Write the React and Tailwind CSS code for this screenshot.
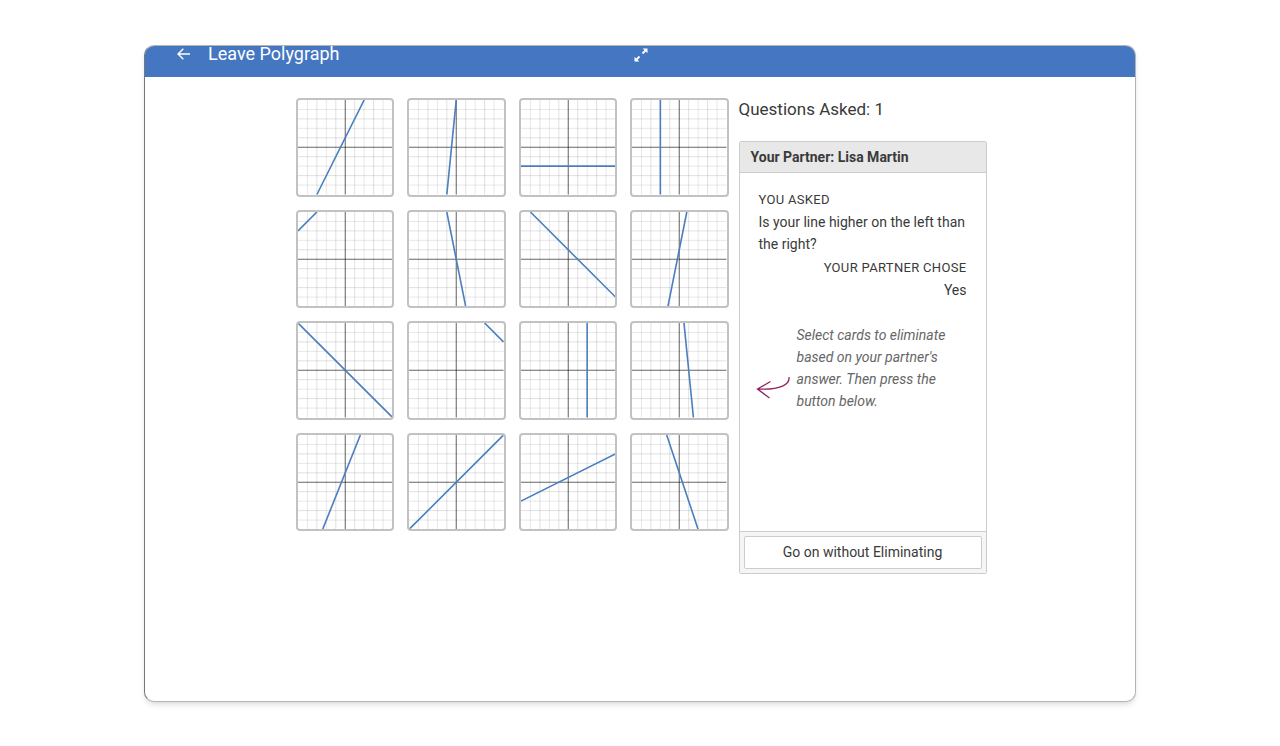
import { useState } from "react";

// each line runs from [x1, y1] to [x2, y2] on a -5..5 plane
const cards = [
  { name: "y = 2x + 1", from: [2, 5], to: [-3, -5] },
  { name: "y = 10x + 5", from: [0, 5], to: [-1, -5] },
  { name: "y = -2", from: [-5, -2], to: [5, -2] },
  { name: "x = -2", from: [-2, 5], to: [-2, -5] },
  { name: "y = x + 8", from: [-5, 3], to: [-3, 5] },
  { name: "y = -5x", from: [-1, 5], to: [1, -5] },
  { name: "y = -x + 1", from: [-4, 5], to: [5, -4] },
  { name: "y = 5x + 1", from: [0.8, 5], to: [-1.2, -5] },
  { name: "y = -x", from: [-5, 5], to: [5, -5] },
  { name: "y = -x + 8", from: [3, 5], to: [5, 3] },
  { name: "x = 2", from: [2, 5], to: [2, -5] },
  { name: "y = -10x + 10", from: [0.5, 5], to: [1.5, -5] },
  { name: "y = 2.5x + 1", from: [1.6, 5], to: [-2.4, -5] },
  { name: "y = x", from: [-5, -5], to: [5, 5] },
  { name: "y = 0.5x + 0.5", from: [-5, -2], to: [5, 3] },
  { name: "y = -3x + 1", from: [-1.33, 5], to: [2, -5] },
];

const ticks = [-4, -3, -2, -1, 1, 2, 3, 4];

function Graph({ from, to }) {
  return (
    <svg viewBox="-50 -50 100 100" className="block h-full w-full" aria-hidden="true">
      {ticks.map((t) => (
        <g key={t} stroke="#000" strokeOpacity={t % 2 ? 0.13 : 0.1} strokeWidth="1">
          <line x1={t * 10} y1="-50" x2={t * 10} y2="50" />
          <line x1="-50" y1={t * 10} x2="50" y2={t * 10} />
        </g>
      ))}
      <g stroke="#000" strokeOpacity="0.6" strokeWidth="1.1">
        <line x1="0" y1="-50" x2="0" y2="50" />
        <line x1="-50" y1="0" x2="50" y2="0" />
      </g>
      <line
        x1={from[0] * 10}
        y1={-from[1] * 10}
        x2={to[0] * 10}
        y2={-to[1] * 10}
        stroke="#4a7ebf"
        strokeWidth="1.7"
      />
    </svg>
  );
}

function Header() {
  return (
    <header className="grid h-[31px] grid-cols-[1fr_auto_1fr] items-start bg-[#4476c2] text-white">
      <a href="#" className="flex h-4 items-center gap-[18px] pl-8 text-lg">
        <svg width="13" height="12" viewBox="0 0 13 12" fill="none" stroke="currentColor" strokeWidth="1.4" aria-hidden="true">
          <path d="M13 6H1M6.3 0.7L1 6l5.3 5.3" />
        </svg>
        Leave Polygraph
      </a>
      <button type="button" aria-label="Full screen" className="flex h-[18px] items-center pl-0.5">
        <svg width="14" height="14" viewBox="0 0 14 14" fill="currentColor" aria-hidden="true">
          <path d="M8.7 0.5h4.8v4.8L11.8 3.6L9.2 6.2L7.8 4.8L10.4 2.2z" />
          <path d="M0.5 8.7v4.8h4.8L3.6 11.8L6.2 9.2L4.8 7.8L2.2 10.4z" />
        </svg>
      </button>
    </header>
  );
}

function PartnerPanel({ eliminated }) {
  return (
    <section className="flex h-[433px] flex-col rounded-xs border border-[#ccc] text-sm">
      <h2 className="flex h-[31px] items-center border-b border-[#ccc] bg-[#e8e8e8] px-[11px] pb-px font-bold">
        Your Partner: Lisa Martin
      </h2>
      <div className="flex-1 px-[19px] pt-4 leading-[22px]">
        <p className="text-[13px] leading-[22px] tracking-wide">YOU ASKED</p>
        <p>Is your line higher on the left than the right?</p>
        <div className="mt-0.5 text-right">
          <p className="text-[13px] leading-[22px] tracking-wide">YOUR PARTNER CHOSE</p>
          <p>Yes</p>
        </div>
        <div className="mt-[23px] flex">
          <svg width="38" height="86" viewBox="0 0 38 86" fill="none" stroke="#8f2464" strokeWidth="1.3" className="shrink-0 overflow-visible" aria-hidden="true">
            <path d="M30 53C31 60 22 66.500 -1.500 65M11.500 57.500L-1.500 65L10.500 74" />
          </svg>
          <p className="pr-3 text-[#666] italic">
            Select cards to eliminate based on your partner's answer. Then press the button below.
          </p>
        </div>
      </div>
      <div className="border-t border-[#ccc] bg-[#f5f5f5] p-1">
        <button type="button" className="h-[33px] w-full rounded-xs border border-[#ccc] bg-white pb-0.5">
          {eliminated ? "Eliminate" : "Go on without Eliminating"}
        </button>
      </div>
    </section>
  );
}

export default function App() {
  const [selected, setSelected] = useState([]);

  const toggle = (i) =>
    setSelected(selected.includes(i) ? selected.filter((s) => s !== i) : [...selected, i]);

  return (
    <div className="flex min-h-screen flex-col bg-white px-36 pt-[45px] pb-11 font-['Roboto',sans-serif] text-[#3a3a3a]">
      <div className="flex-1 overflow-hidden rounded-[10px] border border-[#b4b4b4] border-l-[#777] bg-white shadow-md">
        <Header />
        <main className="flex justify-center gap-[10px] pt-[21px] pl-0.5">
          <div className="grid w-[433px] grid-cols-4 content-start gap-[13px]">
            {cards.map((card, i) => (
              <button
                key={card.name}
                type="button"
                aria-label={card.name}
                onClick={() => toggle(i)}
                className={`aspect-square overflow-hidden rounded-sm border-2 border-[#c2c2c2] ${selected.includes(i) ? "opacity-30" : ""}`}
              >
                <Graph from={card.from} to={card.to} />
              </button>
            ))}
          </div>
          <aside className="w-[248px]">
            <h1 className="mb-[21px] text-[17px] leading-[22px]">Questions Asked: 1</h1>
            <PartnerPanel eliminated={selected.length > 0} />
          </aside>
        </main>
      </div>
    </div>
  );
}
